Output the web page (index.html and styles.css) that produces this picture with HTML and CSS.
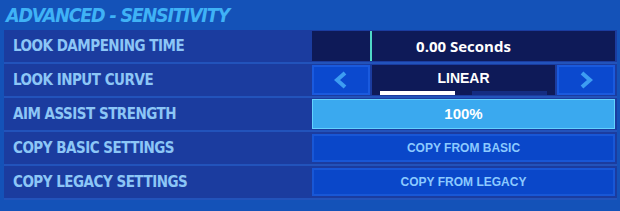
FILE: index.html
```html
<!DOCTYPE html>
<html lang="en">
<head>
  <meta charset="UTF-8">
  <title>Advanced - Sensitivity</title>
  <link rel="stylesheet" href="styles.css">
</head>
<body>
  <h1 class="title">ADVANCED - SENSITIVITY</h1>

  <div class="rows">
    <div class="row">
      <div class="label">LOOK DAMPENING TIME</div>
      <div class="ctrl">
        <div class="value">0.00 Seconds</div>
      </div>
    </div>

    <div class="row">
      <div class="label">LOOK INPUT CURVE</div>
      <div class="ctrl">
        <div class="picker">
          <button class="arrow">
            <svg width="14" height="18" viewBox="0 0 14 18"><polyline points="11,2 3,9 11,16" fill="none" stroke="#3d9df2" stroke-width="4" stroke-linejoin="miter"/></svg>
          </button>
          <div class="choice">
            <span>LINEAR</span>
            <div class="pages"><i class="on"></i><i></i></div>
          </div>
          <button class="arrow">
            <svg width="14" height="18" viewBox="0 0 14 18"><polyline points="3,2 11,9 3,16" fill="none" stroke="#3d9df2" stroke-width="4" stroke-linejoin="miter"/></svg>
          </button>
        </div>
      </div>
    </div>

    <div class="row">
      <div class="label">AIM ASSIST STRENGTH</div>
      <div class="ctrl">
        <div class="value active">100%</div>
      </div>
    </div>

    <div class="row">
      <div class="label">COPY BASIC SETTINGS</div>
      <div class="ctrl">
        <button class="copy">COPY FROM BASIC</button>
      </div>
    </div>

    <div class="row">
      <div class="label">COPY LEGACY SETTINGS</div>
      <div class="ctrl">
        <button class="copy">COPY FROM LEGACY</button>
      </div>
    </div>
  </div>
</body>
</html>
```

FILE: styles.css
```css
body {
  margin: 0;
  background: #1452b8;
  font-family: "DejaVu Sans Condensed", "Liberation Sans", sans-serif;
  height: 211px;
  overflow: hidden;
}
.title {
  margin: 0;
  height: 30px;
  padding-left: 6px;
  font-size: 19.5px;
  line-height: 31px;
  font-style: italic;
  font-weight: 900;
  color: #3fb2f6;
  letter-spacing: -1.2px;
}
.rows {
  margin-left: 4px;
  width: 613px;
  display: grid;
  gap: 2px;
  background: #2253bb;
  padding-bottom: 2px;
}
.row {
  height: 32px;
  display: grid;
  grid-template-columns: 307px 1fr;
  align-items: center;
  background: #1b3c9f;
}
.label {
  padding-left: 9px;
  font-size: 15px;
  font-weight: bold;
  color: #8cc6f6;
  letter-spacing: -0.5px;
}
.ctrl {
  height: 32px;
  padding: 1px 2px 1px 1px;
  box-sizing: border-box;
  display: flex;
  align-items: center;
}
.value {
  position: relative;
  flex: 1;
  height: 30px;
  background: #0e1a58;
  color: #fff;
  font-family: "Open Sans", "Liberation Sans", sans-serif;
  font-weight: bold;
  font-size: 15px;
  line-height: 30px;
  text-align: center;
}
.value::before {
  content: "";
  position: absolute;
  left: 58px;
  top: 0;
  bottom: 0;
  width: 2px;
  background: #4fd8c8;
}
.value.active {
  background: #3aa9ef;
  box-shadow: inset 0 0 0 1px #63d2ff;
  font-family: "Liberation Sans", sans-serif;
}
.value.active::before { display: none; }
.picker {
  flex: 1;
  height: 30px;
  display: grid;
  grid-template-columns: 58px 1fr 58px;
  gap: 2px;
}
.arrow {
  border: none;
  margin: 0;
  padding: 0;
  background: #0b49cf;
  box-shadow: inset 0 0 0 2px #1a5ade;
  display: flex;
  align-items: center;
  justify-content: center;
}
.choice {
  background: #0e1a58;
  color: #fff;
  display: flex;
  flex-direction: column;
  align-items: center;
}
.choice span {
  font-family: "Liberation Sans", sans-serif;
  font-weight: bold;
  font-size: 14px;
  line-height: 26px;
}
.pages {
  align-self: stretch;
  display: flex;
  gap: 17px;
  padding: 0 8px;
}
.pages i {
  width: 75px;
  height: 4px;
  background: #142c82;
}
.pages i.on { background: #fff; }
.copy {
  flex: 1;
  height: 28px;
  margin: 0;
  border: none;
  background: #0a47c9;
  box-shadow: inset 0 0 0 2px #1857d6;
  color: #8ccaff;
  font-family: "Liberation Sans", sans-serif;
  font-weight: bold;
  font-size: 12px;
}
```
